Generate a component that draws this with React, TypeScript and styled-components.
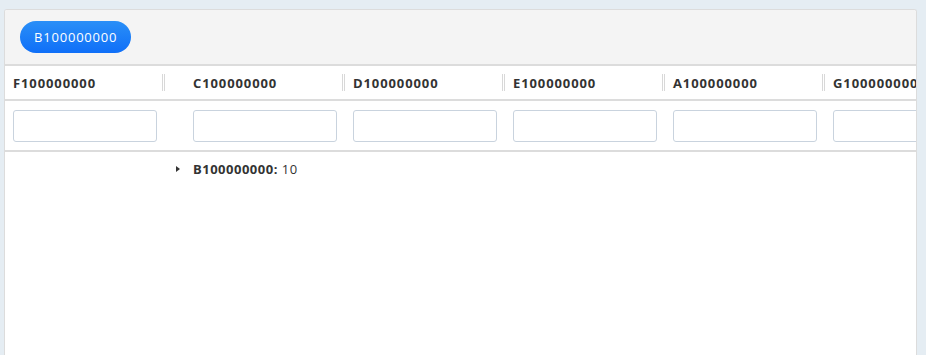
import React from 'react';
import styled, { createGlobalStyle } from 'styled-components';

const GlobalStyle = createGlobalStyle`
  html, body {
    margin: 0;
    padding: 0;
    background: #e5edf3;
    overflow: hidden;
  }
  body {
    font-family: "Open Sans", "DejaVu Sans", sans-serif;
    color: #333;
  }
`;

const Page = styled.div`
  padding: 9px 9px 0 4px;
  height: 355px;
  box-sizing: border-box;
`;

const Panel = styled.div`
  background: #fff;
  border: 1px solid #dcdcdc;
  border-bottom: none;
  border-radius: 3px 3px 0 0;
  height: 100%;
  overflow: hidden;
  box-sizing: border-box;
`;

const Toolbar = styled.div`
  display: flex;
  align-items: center;
  height: 54px;
  padding: 0 15px;
  background: #f4f4f4;
  border-bottom: 2px solid #dcdcdc;
`;

const GroupChip = styled.button`
  height: 32px;
  padding: 0 14px;
  border: none;
  border-radius: 16px;
  background: linear-gradient(180deg, #2a8ff7 0%, #0f6ff8 100%);
  color: #fff;
  font-family: "Open Sans", sans-serif;
  font-size: 13px;
  letter-spacing: 0.8px;
  cursor: pointer;
`;

const Row = styled.div<{ $height: number }>`
  display: flex;
  height: ${(p) => p.$height}px;
  border-bottom: 2px solid #dcdcdc;
  white-space: nowrap;
`;

const HeaderCell = styled.div<{ $width: number; $indent: number }>`
  flex: 0 0 ${(p) => p.$width}px;
  display: flex;
  align-items: center;
  padding-left: ${(p) => p.$indent}px;
  box-sizing: border-box;
  position: relative;
  font-size: 13px;
  font-weight: 700;
  letter-spacing: 0.9px;
  color: #333;
`;

const Separator = styled.span`
  position: absolute;
  right: 0;
  top: 8px;
  bottom: 8px;
  width: 1px;
  border-left: 1px solid #d8d8d8;
  border-right: 1px solid #d8d8d8;
`;

const FilterCell = styled.div<{ $width: number; $indent: number }>`
  flex: 0 0 ${(p) => p.$width}px;
  display: flex;
  align-items: center;
  padding-left: ${(p) => p.$indent}px;
  box-sizing: border-box;
`;

const FilterInput = styled.input`
  width: 144px;
  height: 32px;
  box-sizing: border-box;
  border: 1px solid #c9d3de;
  border-radius: 3px;
  background: #fff;
  outline: none;
`;

const GroupRow = styled.div`
  display: flex;
  align-items: center;
  height: 34px;
  padding-left: 169px;
  font-size: 13px;
  letter-spacing: 0.5px;
  color: #333;
`;

const Caret = styled.svg`
  width: 8px;
  height: 8px;
  margin-right: 11px;
`;

const GroupKey = styled.span`
  font-weight: 700;
  margin-right: 4px;
`;

const columns = [
  { key: 'F100000000', width: 160, indent: 8 },
  { key: 'C100000000', width: 180, indent: 28 },
  { key: 'D100000000', width: 160, indent: 8 },
  { key: 'E100000000', width: 160, indent: 8 },
  { key: 'A100000000', width: 160, indent: 8 },
  { key: 'G100000000', width: 160, indent: 8 },
];

const App = () => {
  return (
    <Page>
      <GlobalStyle />
      <Panel>
        <Toolbar>
          <GroupChip>B100000000</GroupChip>
        </Toolbar>

        <Row $height={33}>
          {columns.map((c) => (
            <HeaderCell key={c.key} $width={c.width} $indent={c.indent}>
              {c.key}
              <Separator />
            </HeaderCell>
          ))}
        </Row>

        <Row $height={49}>
          {columns.map((c) => (
            <FilterCell key={c.key} $width={c.width} $indent={c.indent}>
              <FilterInput type="text" />
            </FilterCell>
          ))}
        </Row>

        <GroupRow>
          <Caret viewBox="0 0 8 8">
            <path d="M2 1 L6 4 L2 7 Z" fill="#333" />
          </Caret>
          <GroupKey>B100000000:</GroupKey>
          <span>10</span>
        </GroupRow>
      </Panel>
    </Page>
  );
};

export default App;
